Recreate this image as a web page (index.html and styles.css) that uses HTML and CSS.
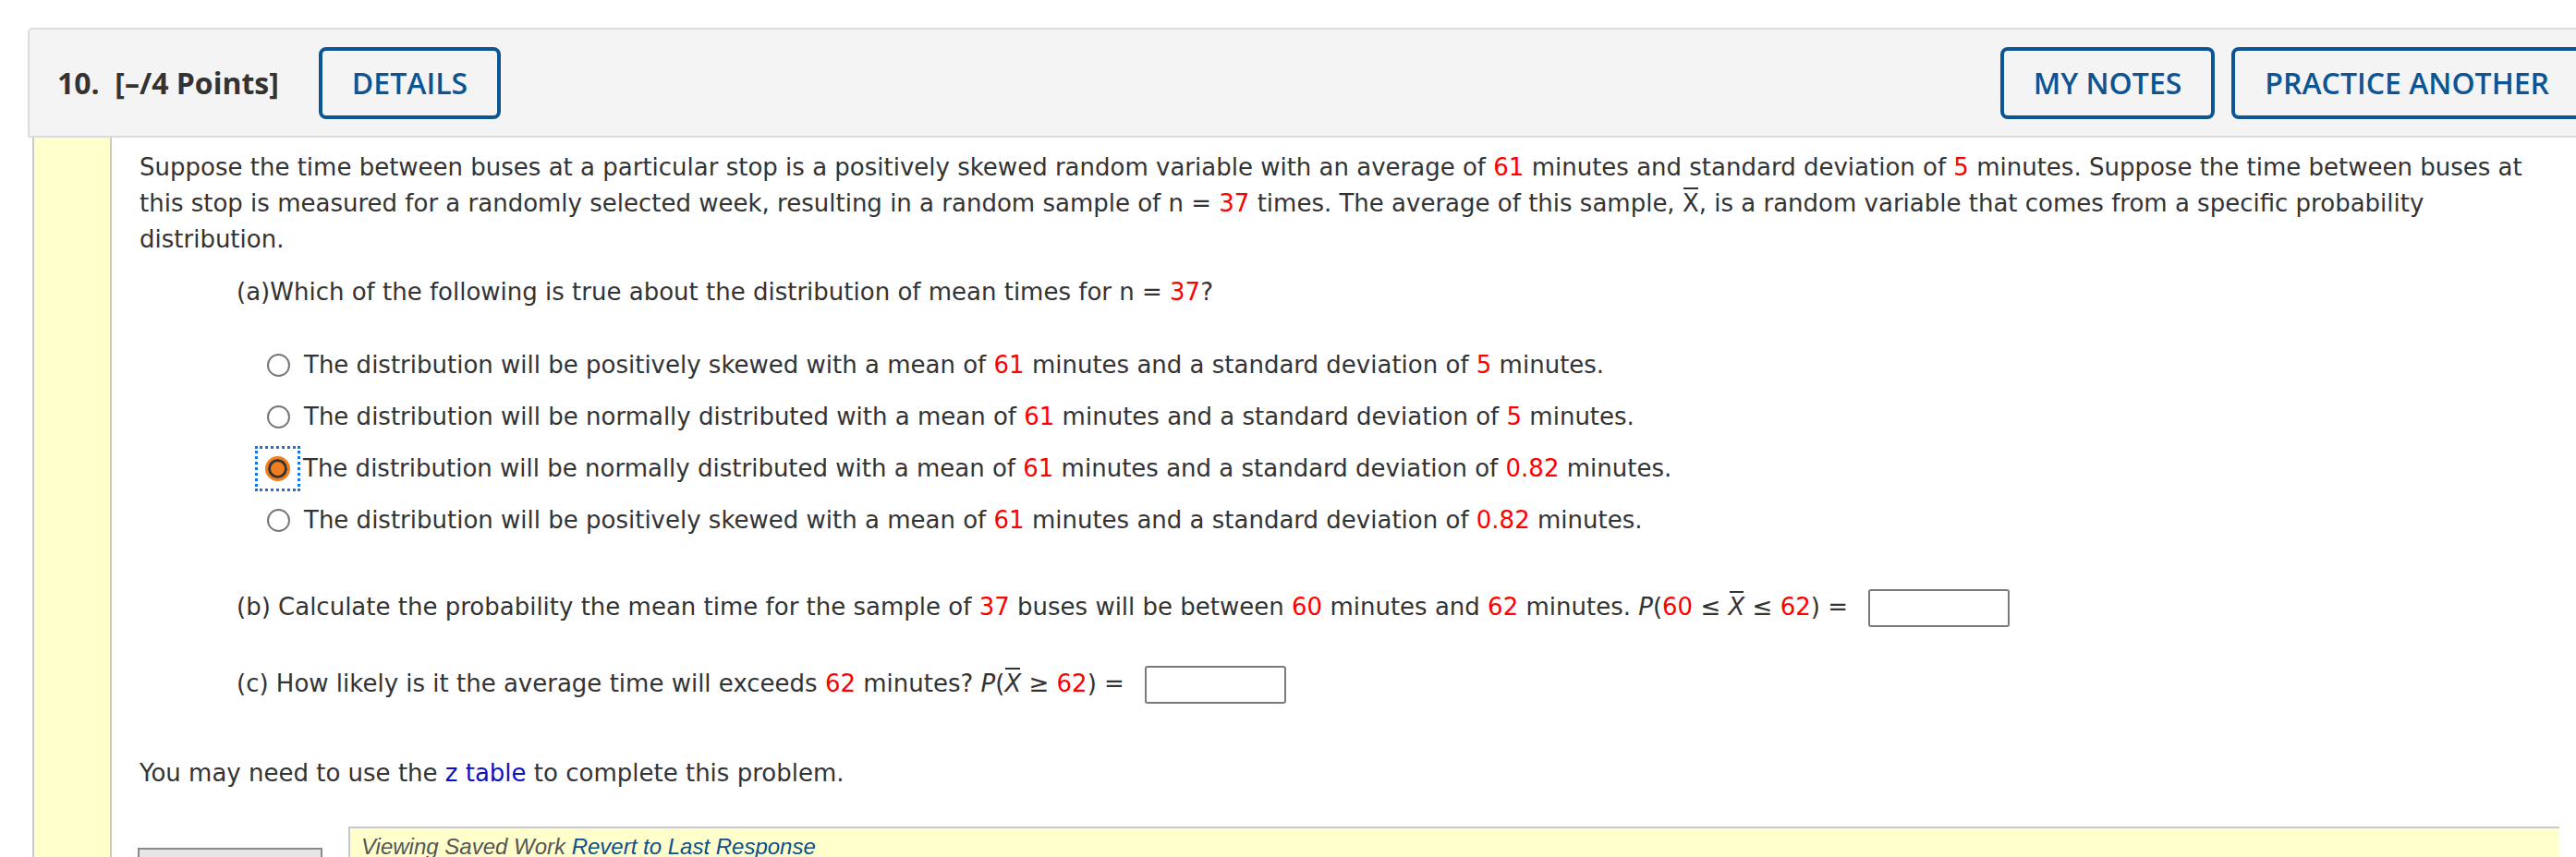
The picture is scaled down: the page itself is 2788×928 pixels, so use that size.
FILE: index.html
```html
<!DOCTYPE html>
<html lang="en">
<head>
<meta charset="utf-8">
<title>Question 10</title>
<link rel="stylesheet" href="styles.css">
</head>
<body>
<div class="page">
  <div class="question">
    <div class="q-header">
      <div class="q-title">10.&nbsp; [–/4 Points]</div>
      <button class="btn">DETAILS</button>
      <div class="spacer"></div>
      <div class="btn-group">
        <button class="btn">MY NOTES</button>
        <button class="btn">PRACTICE ANOTHER</button>
      </div>
    </div>
    <div class="q-body">
      <div class="strip"></div>
      <div class="content">
        <p class="stem">Suppose the time between buses at a particular stop is a positively skewed random variable with an average of <span class="red">61</span> minutes and standard deviation of <span class="red">5</span> minutes. Suppose the time between buses at this stop is measured for a randomly selected week, resulting in a random sample of n = <span class="red">37</span> times. The average of this sample, <span class="xbar">X</span>, is a random variable that comes from a specific probability distribution.</p>
        <p class="part">(a)Which of the following is true about the distribution of mean times for n = <span class="red">37</span>?</p>
        <ul class="options">
          <li class="option"><span class="radio"></span><span class="label">The distribution will be positively skewed with a mean of <span class="red">61</span> minutes and a standard deviation of <span class="red">5</span> minutes.</span></li>
          <li class="option"><span class="radio"></span><span class="label">The distribution will be normally distributed with a mean of <span class="red">61</span> minutes and a standard deviation of <span class="red">5</span> minutes.</span></li>
          <li class="option option-selected"><span class="radio-focus"><span class="radio radio-checked"></span></span><span class="label">The distribution will be normally distributed with a mean of <span class="red">61</span> minutes and a standard deviation of <span class="red">0.82</span> minutes.</span></li>
          <li class="option"><span class="radio"></span><span class="label">The distribution will be positively skewed with a mean of <span class="red">61</span> minutes and a standard deviation of <span class="red">0.82</span> minutes.</span></li>
        </ul>
        <p class="part part-b">(b) Calculate the probability the mean time for the sample of <span class="red">37</span> buses will be between <span class="red">60</span> minutes and <span class="red">62</span> minutes. <i>P</i>(<span class="red">60</span> ≤ <i class="xbar">X</i> ≤ <span class="red">62</span>) = <span class="answer"></span></p>
        <p class="part part-c">(c) How likely is it the average time will exceeds <span class="red">62</span> minutes? <i>P</i>(<i class="xbar">X</i> ≥ <span class="red">62</span>) = <span class="answer"></span></p>
        <p class="note">You may need to use the <a class="link" href="#">z table</a> to complete this problem.</p>
        <div class="footer-row">
          <div class="submit-btn"></div>
          <div class="saved"><i>Viewing Saved Work</i> <a class="revert" href="#">Revert to Last Response</a></div>
        </div>
      </div>
    </div>
  </div>
</div>
</body>
</html>
```
FILE: styles.css
```css
html, body {
  margin: 0;
  padding: 0;
}

body {
  width: 2788px;
  height: 928px;
  overflow: hidden;
  background: #ffffff;
  font-family: "DejaVu Sans", Verdana, sans-serif;
  color: #333333;
}

.page {
  padding: 30px 0 0 30px;
}

.question {
  width: 2800px;
}

/* ---------- header ---------- */
.q-header {
  display: flex;
  align-items: center;
  height: 115px;
  background: #f4f4f4;
  border: 2px solid #dcdcdc;
  border-radius: 5px 5px 0 0;
  padding: 0 33px 0 30px;
  font-family: "Open Sans", "Liberation Sans", sans-serif;
}

.q-title {
  font-weight: 700;
  font-size: 32px;
  color: #333333;
  margin-right: 43px;
  white-space: nowrap;
}

.spacer {
  flex: 1;
}

.btn-group {
  display: flex;
  gap: 18px;
}

.btn {
  font-family: "Open Sans", "Liberation Sans", sans-serif;
  font-weight: 600;
  font-size: 32px;
  color: #0d5592;
  background: transparent;
  border: 4px solid #0d5592;
  border-radius: 8px;
  height: 78px;
  padding: 0 32px;
  white-space: nowrap;
}

/* ---------- body ---------- */
.q-body {
  display: flex;
  height: 800px;
}

.strip {
  width: 82px;
  margin-left: 5px;
  background: #ffffcc;
  border-left: 2px solid #c8c8c8;
  border-right: 2px solid #c8c8c8;
}

.content {
  flex: 1;
  padding: 13px 60px 0 30px;
  font-size: 26px;
  line-height: 39px;
}

.content p {
  margin: 0;
}

.red {
  color: #ff0000;
}

.xbar {
  position: relative;
}

.xbar::before {
  content: "";
  position: absolute;
  left: 1px;
  right: 1px;
  top: -2px;
  border-top: 2px solid #333333;
}

.part {
  padding-left: 105px;
}

.content p.part {
  margin-top: 18px;
}

.options {
  list-style: none;
  margin: 40px 0 0 0;
  padding: 0 0 0 138px;
}

.option {
  display: flex;
  align-items: center;
  margin-bottom: 17px;
}

.option:last-child {
  margin-bottom: 0;
}

.radio {
  box-sizing: border-box;
  width: 25px;
  height: 25px;
  border: 2px solid #777777;
  border-radius: 50%;
  background: #ffffff;
  margin-right: 15px;
  flex: none;
}

.radio-focus {
  display: flex;
  align-items: center;
  justify-content: center;
  flex: none;
  box-sizing: border-box;
  width: 49px;
  height: 49px;
  margin: -5px 3px -5px -13px;
  border: 3px dotted #1b74d8;
}

.radio-checked {
  width: 27px;
  height: 27px;
  margin-right: 0;
  border: 3px solid #f07d1e;
  background: #f07d1e;
  box-shadow: inset 0 0 0 3px #333333;
}

.content p.part-b {
  margin-top: 55px;
}

.content p.part-c {
  margin-top: 44px;
}

.answer {
  display: inline-block;
  box-sizing: border-box;
  width: 153px;
  height: 41px;
  border: 2px solid #7a7a7a;
  border-radius: 3px;
  background: #ffffff;
  vertical-align: middle;
  margin: -3px 0 -3px 14px;
}

.note {
  margin-top: 58px !important;
}

.link {
  color: #1010c0;
  text-decoration: none;
}

/* ---------- footer ---------- */
.footer-row {
  display: flex;
  align-items: flex-start;
  margin-top: 38px;
}

.submit-btn {
  box-sizing: border-box;
  width: 200px;
  height: 60px;
  margin: 23px 28px 0 -2px;
  background: #e6e6e6;
  border: 2px solid #8a8a8a;
}

.saved {
  flex: 1;
  background: #ffffcc;
  border-top: 2px solid #c8c8c8;
  border-left: 2px solid #c8c8c8;
  padding: 5px 12px;
  font-family: "Liberation Sans", Arial, sans-serif;
  font-size: 24px;
  line-height: 30px;
}

.saved i {
  color: #555555;
}

.revert {
  color: #0c4f8c;
  font-style: italic;
  text-decoration: none;
}
```
